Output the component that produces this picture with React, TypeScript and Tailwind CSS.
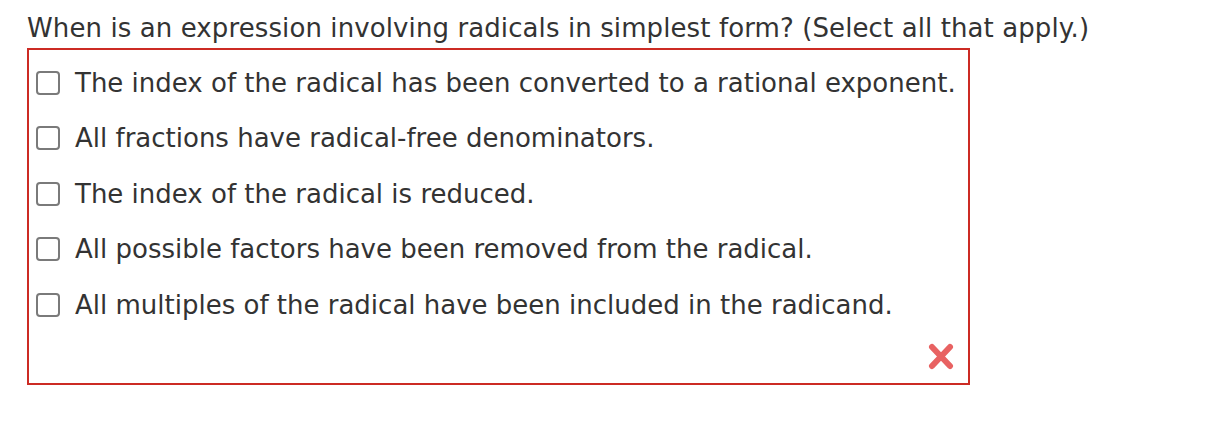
const options = [
  "The index of the radical has been converted to a rational exponent.",
  "All fractions have radical-free denominators.",
  "The index of the radical is reduced.",
  "All possible factors have been removed from the radical.",
  "All multiples of the radical have been included in the radicand.",
];

export default function App() {
  return (
    <div className="w-[1220px] h-[430px] bg-white text-[#333] font-['DejaVu_Sans',Verdana,sans-serif]">
      <div className="pl-[27px] pt-[13px]">
        <p className="text-[26px] leading-[30px] tracking-[0.1px]">
          When is an expression involving radicals in simplest form? (Select all that apply.)
        </p>
        <div className="mt-[5px] w-[943px] h-[337px] border-2 border-[#cc2b24] flex flex-col">
          <div className="pt-[5px] flex flex-col">
            {options.map((o) => (
              <label key={o} className="flex items-center h-[55.5px] pl-[7px]">
                <span className="block w-[24px] h-[24px] rounded-[4px] border-2 border-[#7a7a7a] bg-white shrink-0" />
                <span className="ml-[15px] text-[26px] leading-[30px]">{o}</span>
              </label>
            ))}
          </div>
          <div className="flex-1 flex justify-end items-end pr-[14px] pb-[13px]">
            <svg width="26" height="27" viewBox="0 0 26 27">
              <path d="M4 4 L22 23 M22 4 L4 23" stroke="#e86262" strokeWidth="6" strokeLinecap="round" />
            </svg>
          </div>
        </div>
      </div>
    </div>
  );
}
